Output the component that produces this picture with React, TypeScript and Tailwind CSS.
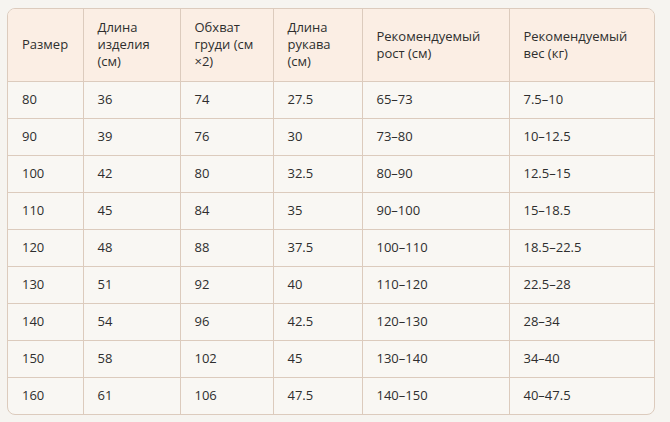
import * as React from 'react';

const headers = [
    'Размер',
    'Длина изделия (см)',
    'Обхват груди (см ×2)',
    'Длина рукава (см)',
    'Рекомендуемый рост (см)',
    'Рекомендуемый вес (кг)',
];

const widths = ['w-[75px]', 'w-[97px]', 'w-[93px]', 'w-[89px]', 'w-[147px]', 'w-[145px]'];

const rows = [
    ['80', '36', '74', '27.5', '65–73', '7.5–10'],
    ['90', '39', '76', '30', '73–80', '10–12.5'],
    ['100', '42', '80', '32.5', '80–90', '12.5–15'],
    ['110', '45', '84', '35', '90–100', '15–18.5'],
    ['120', '48', '88', '37.5', '100–110', '18.5–22.5'],
    ['130', '51', '92', '40', '110–120', '22.5–28'],
    ['140', '54', '96', '42.5', '120–130', '28–34'],
    ['150', '58', '102', '45', '130–140', '34–40'],
    ['160', '61', '106', '47.5', '140–150', '40–47.5'],
];

const App: React.FC = () => {
    return (
        <div className="w-[670px] h-[422px] bg-[#f6f4f0] pt-[8px] pl-[7px] font-['Open_Sans',sans-serif] text-[13px] text-[#2e2e2e]">
            <div className="w-[648px] rounded-lg border border-[#dccbbd] overflow-hidden bg-[#f9f7f3]">
                <table className="w-full table-fixed border-collapse">
                    <thead>
                        <tr className="h-[72px] bg-[#fbeee4]">
                            {headers.map((h, i) => (
                                <th
                                    key={i}
                                    className={`${widths[i]} text-left font-normal leading-[17px] pl-[14px] pr-2 align-middle border-b border-[#dccbbd] ${i < 5 ? 'border-r' : ''}`}
                                >
                                    {h}
                                </th>
                            ))}
                        </tr>
                    </thead>
                    <tbody>
                        {rows.map((r, ri) => (
                            <tr key={ri} className="h-[37px]">
                                {r.map((c, ci) => (
                                    <td
                                        key={ci}
                                        className={`pl-[14px] align-middle border-[#dccbbd] ${ci < 5 ? 'border-r' : ''} ${ri < 8 ? 'border-b' : ''}`}
                                    >
                                        {c}
                                    </td>
                                ))}
                            </tr>
                        ))}
                    </tbody>
                </table>
            </div>
        </div>
    );
};

export default App;
